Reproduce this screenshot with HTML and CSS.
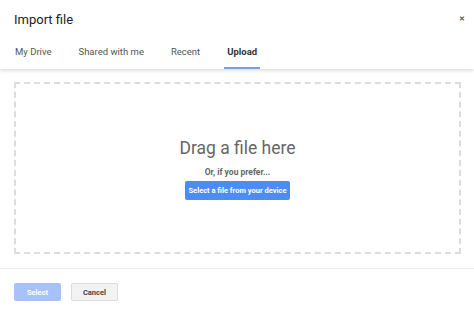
FILE: index.html
```html
<!DOCTYPE html>
<html lang="en">
<head>
  <meta charset="UTF-8">
  <title>Import file</title>
  <link rel="stylesheet" href="styles.css">
</head>
<body>
  <div class="dialog">
    <div class="head">
      <div class="title-row">
        <span class="title">Import file</span>
        <span class="close">&#x2715;</span>
      </div>
      <div class="tabs">
        <div class="tab">My Drive</div>
        <div class="tab">Shared with me</div>
        <div class="tab">Recent</div>
        <div class="tab active">Upload</div>
      </div>
    </div>

    <div class="drop">
      <div class="drop-title">Drag a file here</div>
      <div class="drop-sub">Or, if you prefer...</div>
      <button class="pick">Select a file from your device</button>
    </div>

    <div class="foot">
      <button class="btn btn-select">Select</button>
      <button class="btn btn-cancel">Cancel</button>
    </div>
  </div>
</body>
</html>
```

FILE: styles.css
```css
body {
  margin: 0;
  background-color: #fff;
  font-family: Roboto, "Liberation Sans", Arial, sans-serif;
  color: #333;
}
.dialog {
  width: 474px;
  height: 315px;
  display: flex;
  flex-direction: column;
}
.head {
  box-shadow: 0 2px 3px rgba(0, 0, 0, 0.12);
  position: relative;
  z-index: 1;
}
.title-row {
  display: flex;
  align-items: center;
  justify-content: space-between;
  height: 38px;
  padding: 0 9px 0 14px;
}
.title {
  font-size: 13px;
  color: #222;
}
.close {
  font-size: 7px;
  color: #555;
  font-weight: bold;
}
.tabs {
  display: flex;
  gap: 21px;
  height: 31px;
  padding-left: 12px;
}
.tab {
  padding: 8px 3px 0;
  font-size: 9.5px;
  color: #555;
  border-bottom: 2px solid transparent;
  box-sizing: border-box;
}
.tab.active {
  font-weight: bold;
  color: #333;
  border-bottom-color: #7b9ee0;
}
.drop {
  margin: 13px 13px 0 14px;
  height: 172px;
  box-sizing: border-box;
  border: 2px dashed #dcdcdc;
  display: flex;
  flex-direction: column;
  align-items: center;
  padding-top: 53px;
}
.drop-title {
  font-size: 17.5px;
  color: #666;
  line-height: 22px;
}
.drop-sub {
  margin-top: 8px;
  font-size: 8.5px;
  font-weight: bold;
  color: #666;
}
.pick {
  margin-top: 4px;
  height: 19px;
  width: 105px;
  padding: 0;
  border: none;
  border-radius: 2px;
  background-color: #4d8cf5;
  color: #fff;
  font-family: inherit;
  font-size: 7.5px;
  font-weight: bold;
}
.foot {
  margin-top: 14px;
  border-top: 1px solid #ececec;
  display: flex;
  gap: 10px;
  padding: 14px 14px 0;
}
.btn {
  height: 18px;
  width: 47px;
  padding: 0;
  border-radius: 2px;
  font-family: inherit;
  font-size: 7.5px;
  font-weight: bold;
}
.btn-select {
  border: none;
  background-color: #a7c2f8;
  color: #fff;
}
.btn-cancel {
  border: 1px solid #dcdcdc;
  background-color: #f3f3f3;
  color: #444;
}
```
